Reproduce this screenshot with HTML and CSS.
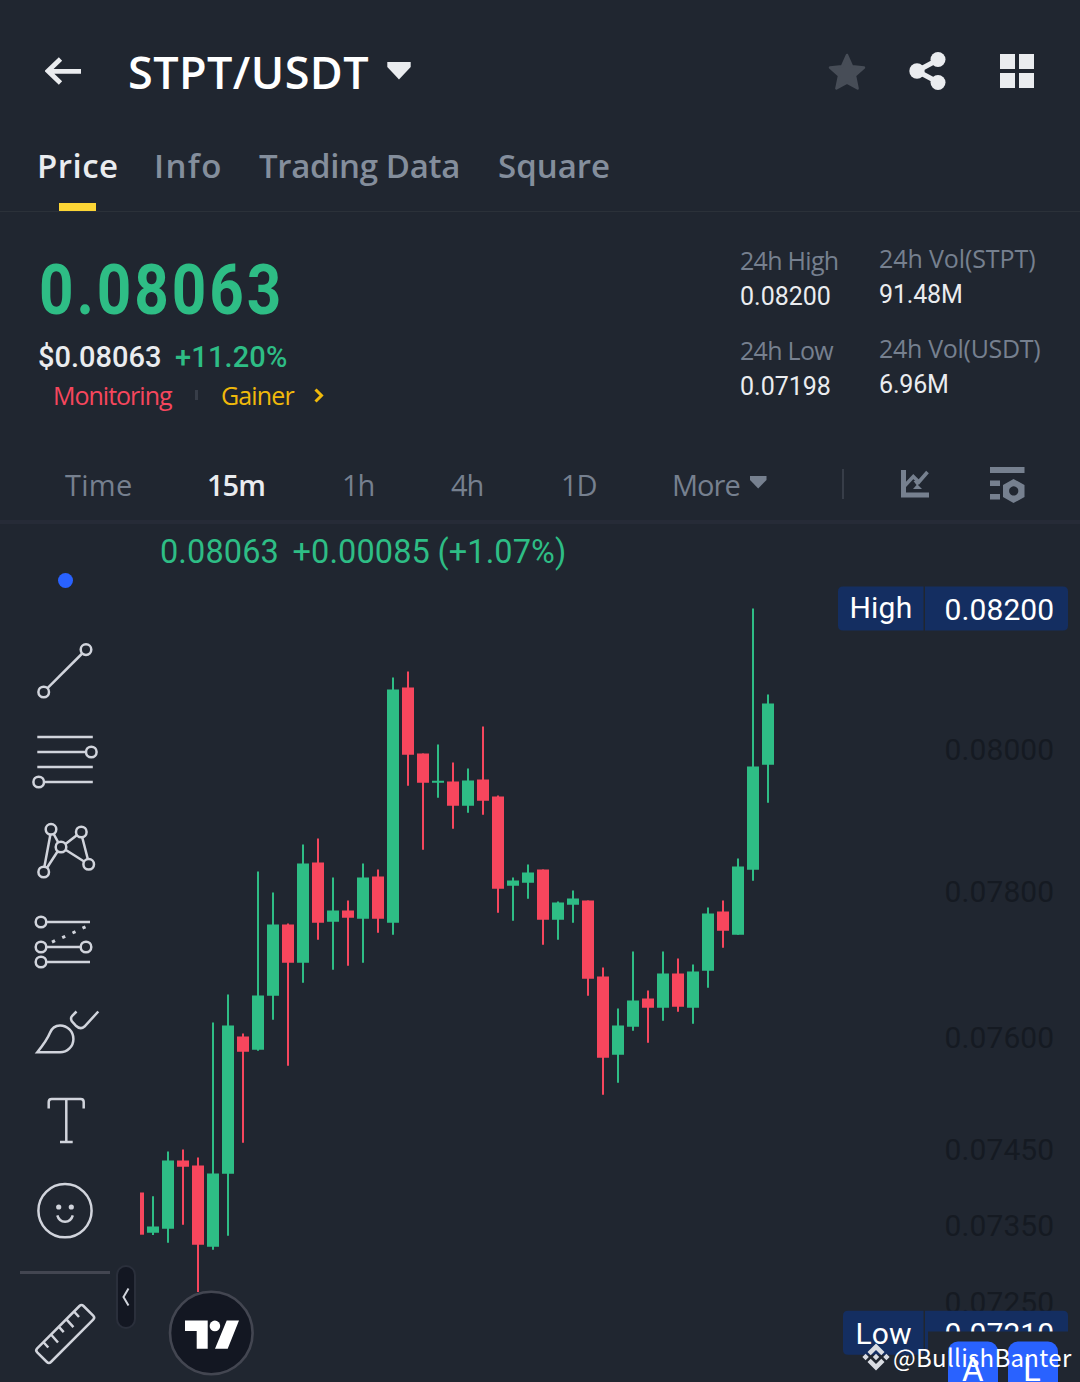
FILE: index.html
```html
<!DOCTYPE html>
<html lang="en">
<head>
<meta charset="utf-8">
<title>STPT/USDT</title>
<link rel="stylesheet" href="styles.css">
</head>
<body>
<main class="app">
  <header class="header">
    <svg class="back" width="36" height="28" viewBox="0 0 36 28"><path d="M15.500 2 3 14l12.500 12M2.500 14.300H36" fill="none" stroke="#eaecef" stroke-width="4.800"/></svg>
    <h1 class="pair">STPT/USDT</h1>
    <svg class="pair-caret" width="24" height="18" viewBox="0 0 24 18"><path d="M.3 0h23.400v5L12 17.600.3 5z" fill="#eaecef"/></svg>
    <div class="actions">
      <svg width="38" height="38" viewBox="0 0 38 38"><path d="M19 2l5 11.200 12 1.300-9 8.200 2.600 12.800L19 29.600 8.400 35.500 11 22.700 2 14.500l12-1.300z" fill="#474d57" stroke="#474d57" stroke-width="2.500" stroke-linejoin="round"/></svg>
      <svg width="37" height="38" viewBox="0 0 37 38"><path d="M29.500 7.500 8 19l21.500 11.500" fill="none" stroke="#eaecef" stroke-width="5"/><g fill="#eaecef"><circle cx="29" cy="7.500" r="7.500"/><circle cx="8" cy="19" r="7.700"/><circle cx="29" cy="30.500" r="7.500"/></g></svg>
      <svg width="34" height="34" viewBox="0 0 34 34"><path d="M0 0h15v15H0zM19 0h15v15H19zM0 19h15v15H0zM19 19h15v15H19z" fill="#eaecef"/></svg>
    </div>
  </header>

  <nav class="tabs">
    <span class="tab tab-active">Price</span>
    <span class="tab tab-info">Info</span>
    <span class="tab tab-data">Trading Data</span>
    <span class="tab">Square</span>
  </nav>

  <section class="summary">
    <div class="quote">
      <div class="last">0.08063</div>
      <div class="fiat"><span class="fiat-price">$0.08063</span><span class="change">+11.20%</span></div>
      <div class="tags">
        <span class="monitoring">Monitoring</span>
        <i class="tag-sep"></i>
        <span class="gainer">Gainer</span>
        <svg width="10" height="15" viewBox="0 0 10 15"><path d="M1.500 1.500 7.500 7.500 1.500 13.500" fill="none" stroke="#f0b90b" stroke-width="3"/></svg>
      </div>
    </div>
    <div class="stats">
      <dl class="stat high"><dt>24h High</dt><dd>0.08200</dd></dl>
      <dl class="stat low"><dt>24h Low</dt><dd>0.07198</dd></dl>
    </div>
    <div class="stats stats-volume">
      <dl class="stat vol-base"><dt>24h Vol(STPT)</dt><dd>91.48M</dd></dl>
      <dl class="stat vol-quote"><dt>24h Vol(USDT)</dt><dd>6.96M</dd></dl>
    </div>
  </section>

  <nav class="intervals">
    <span class="interval time">Time</span>
    <span class="interval interval-active">15m</span>
    <span class="interval">1h</span>
    <span class="interval">4h</span>
    <span class="interval">1D</span>
    <span class="interval more">More <svg width="17" height="13" viewBox="0 0 17 13"><path d="M0 0h16.500v4L8.200 12.500 0 4z" fill="#76808f"/></svg></span>
    <span class="tools">
      <i class="tool-sep"></i>
      <svg class="chart-type" width="28" height="28" viewBox="0 0 28 28"><path d="M2.500 0v25H28" fill="none" stroke="#76808f" stroke-width="5"/><path d="M3.500 16 12.300 6.500l5.500 5.500L26.500 2" fill="none" stroke="#76808f" stroke-width="3.600"/><path d="M12.500 11h7L17 15l4 4h-9l3.500-4z" fill="#76808f"/></svg>
      <svg width="35" height="36" viewBox="0 0 35 36"><path d="M0 0h34.500v6H0zM0 13.500h10v5.500H0zM0 27h10v5.500H0z" fill="#76808f"/><path fill-rule="evenodd" d="M23.500 12 34.500 18v12L23.500 36 13 30V18zM23.700 19.300a4.600 4.600 0 1 0 .01 0z" fill="#76808f"/></svg>
    </span>
  </nav>

  <section class="chart">
    <aside class="toolbar">
      <i class="dot"></i>
      <svg class="tool" viewBox="0 626 130 90"><path d="M47.500 688.200 82.200 653.500"/><circle cx="86" cy="649.600" r="5.300"/><circle cx="43.700" cy="692" r="5.300"/></svg>
      <svg class="tool" viewBox="0 716 130 90"><path d="M37.300 737h55.500M37.300 752h48.500M37.300 767h55.500M44.300 782h48.500"/><circle cx="91.300" cy="752" r="5.300"/><circle cx="38.700" cy="782" r="5.300"/></svg>
      <svg class="tool" viewBox="0 806 130 90"><path d="M50.400 834.600 44.400 866.700M53.700 834l4.500 8.300M65.500 844l11.300-8.800M57.700 851.300 47 867.800M65.500 849.800l18.600 11.700M82.200 837.300l5.600 21.700"/><circle cx="51" cy="829.300" r="5.300"/><circle cx="81.300" cy="832" r="5.300"/><circle cx="61" cy="847" r="5.300"/><circle cx="43.700" cy="872" r="5.300"/><circle cx="88.700" cy="864.300" r="5.300"/></svg>
      <svg class="tool" viewBox="0 896 130 90"><path d="M46.500 922H90M46.500 947h34M46.500 962H90"/><path d="M52 942.200l3-1.500M62.200 937.700l3-1.400M72.500 933l3-1.400M82.500 928.200l3-1.400" stroke-width="3"/><circle cx="41" cy="922" r="5.300"/><circle cx="41" cy="947" r="5.300"/><circle cx="86" cy="947" r="5.300"/><circle cx="41" cy="962" r="5.300"/></svg>
      <svg class="tool" viewBox="0 986 130 90"><path d="M37.300 1052.300H60a13.400 13.400 0 0 0 13.400-13.400c0-7.500-6-13.400-13.400-13.400-5 0-8.300 3-10 7.300-2.800 7-7.500 13-12.700 19.500zM76.500 1011.500l-4.300 4.300q-2 2-.5 5.200l4.500 5q4.500 4 8.300.5L98.300 1011.500"/></svg>
      <svg class="tool" viewBox="0 1076 130 90"><path d="M48.700 1108.500v-6.500q0-3 3-3h29q3 0 3 3v6.500M66.300 1099v43M60 1142h12.700"/></svg>
      <svg class="tool" viewBox="0 1166 130 90"><circle cx="65" cy="1210.700" r="26.600"/><path d="M57.300 1215.300c2.500 8.500 13 8.500 15.500 0"/><g class="eyes"><circle cx="58.700" cy="1207" r="2.600"/><circle cx="71.300" cy="1207" r="2.600"/></g></svg>
      <i class="divider"></i>
      <svg class="tool" viewBox="0 1288 130 90"><path d="M37.200 1348.300 79.500 1306q2-2 4 0l9.700 9.700q2 2 0 4L50.900 1362q-2 2-4 0l-9.700-9.700q-2-2 0-4zM43.300 1342l5 5.500M51 1334.500l7 8M58.700 1326.700l5 5.500M66.200 1319.200l7.200 8M74 1311.500l5 5.500"/></svg>
      <span class="collapse"><svg width="8" height="20" viewBox="0 0 8 20"><path d="M6.500 1.500 1.500 10l5 8.500" fill="none" stroke="#d1d4dc" stroke-width="2"/></svg></span>
    </aside>

    <svg class="plot" width="950" height="858" viewBox="130 524 950 858">
      <g class="axis">
        <text x="944.500" y="760">0.08000</text>
        <text x="944.500" y="901.500">0.07800</text>
        <text x="944.500" y="1047.500">0.07600</text>
        <text x="944.500" y="1159.500">0.07450</text>
        <text x="944.500" y="1235.500">0.07350</text>
        <text x="944.500" y="1312.500">0.07250</text>
      </g>
      <g class="legend">
        <text x="160" y="562.500">0.08063</text>
        <text x="292.500" y="562.500">+0.00085</text>
        <text x="437.500" y="562.500">(+1.07%)</text>
      </g>

      <!-- candle wicks -->
      <path class="wick up" d="M153 1196.300V1235M168 1151.500V1242.700M213 1022.500V1249.700M228 994.500V1235.700M258 871.500V1050.700M273 892.500V1019.700M303 844.500V982.700M333 877.500V969.700M363 863.500V962.700M393 677.500V934.700M438 744.500V797.700M468 768.500V812.700M513 877.500V920.700M528 864.500V898.700M558 901.500V939.700M573 890.500V922.700M618 1008.500V1082.700M633 951.500V1030.700M663 951.500V1020.700M693 964.500V1023.700M708 907.500V987.700M738 858.500V934.700M753 608.500V880.700M768 694.500V802.700"/>
      <path class="wick down" d="M183 1149.500V1224.700M198 1157.500V1292M243 1033.500V1142.700M288 923.500V1065.700M318 838.500V939.700M348 900.500V965.700M378 869.500V932.700M408 671.500V785.700M423 753.500V849.700M453 762.500V828.700M483 726.500V814.700M498 795.500V912.700M543 869.500V944.700M588 900.500V995.700M603 967.500V1094.700M648 990.500V1042.700M678 958.500V1011.700M723 900.500V947.700"/>
      <!-- candle bodies -->
      <path class="candle up" d="M153 1226.500V1232.700M168 1160.500V1228.700M213 1173.500V1246.700M228 1025.500V1173.700M258 995.500V1049.700M273 924.500V995.700M303 863.500V962.700M333 910.500V921.700M363 877.500V918.700M393 689.500V922.700M438 780.700V782.700M468 780.500V805.700M513 880.500V885.700M528 872.500V882.700M558 902.500V919.700M573 898.500V904.700M618 1025.500V1054.700M633 1000.500V1026.700M663 973.500V1007.700M693 971.500V1007.700M708 913.500V970.700M738 866.500V934.700M753 766.500V869.700M768 703.500V764.700"/>
      <path class="candle down" d="M183 1160.500V1166.700M198 1165.500V1244.700M243 1036.500V1051.700M288 924.500V962.700M318 862.500V922.700M348 910.500V917.700M378 876.500V918.700M408 687.500V754.700M423 753.500V782.700M453 781.500V805.700M483 779.500V800.700M498 796.500V888.700M543 869.500V919.700M588 900.500V978.700M603 976.500V1057.700M648 998.500V1007.700M678 973.500V1006.700M723 911.500V930.700"/>
      <path d="M140 1192.500h4V1234.700h-4z" fill="#f6465d"/>

      <!-- high and low price labels -->
      <g class="range">
        <path d="M843 586.500h80.500v44H843q-5 0-5-5v-34q0-5 5-5zM925 586.500h138q5 0 5 5v34q0 5-5 5H925z"/>
        <text x="849.500" y="618" class="word">High</text>
        <text x="944.500" y="619.500">0.08200</text>
        <path d="M848 1310.700h75.500v44H848q-5 0-5-5v-34q0-5 5-5zM925 1310.700h138q5 0 5 5v39H925z"/>
        <text x="855.500" y="1343.500">Low</text>
        <text x="944.500" y="1343.500">0.07210</text>
      </g>
      <path d="M928 1331.500h152V1382H928z" fill="#202630"/>
      <rect x="948" y="1341.500" width="50" height="50" rx="10" fill="#2962ff"/>
      <rect x="1008" y="1341.500" width="50" height="50" rx="10" fill="#2962ff"/>
      <g class="scale-mode"><text x="962" y="1381">A</text><text x="1023" y="1381">L</text></g>

      <circle cx="211.300" cy="1333" r="41.300" fill="#131722" stroke="#434651" stroke-width="2.600"/>
      <path d="M185 1320.500h22.700v28.200h-11V1331H185zM226.700 1320.500H239L227.700 1348.700H215z" fill="#fff"/>
      <circle cx="214.900" cy="1325.900" r="5.300" fill="#fff"/>
    </svg>
  </section>

  <div class="watermark">
    <svg width="28" height="28" viewBox="0 0 28 28"><path d="M14 .5 22.500 9l-3.200 3.200L14 6.900l-5.300 5.300L5.500 9zM14 27.500 22.500 19l-3.200-3.200-5.300 5.300-5.300-5.300L5.500 19zM14 10.800l3.200 3.200-3.200 3.200-3.200-3.200zM3.600 10.800 6.800 14l-3.200 3.200L.4 14zM24.400 10.800l3.200 3.200-3.200 3.200-3.200-3.200z" fill="#d9dce2"/></svg>
    <span>@BullishBanter</span>
  </div>
</main>
</body>
</html>
```
FILE: styles.css
```css
* {
  box-sizing: border-box;
  margin: 0;
}

body {
  background: #202630;
  font-family: "Open Sans", "Noto Sans", sans-serif;
  color: #eaecef;
}

svg {
  display: block;
  flex: none;
}

.app {
  position: relative;
  width: 1080px;
  height: 1382px;
  overflow: hidden;
}

/* Header */

.header {
  display: flex;
  align-items: center;
  height: 142px;
  padding: 0 46px 0 45px;
}

.pair {
  width: 259px;
  margin: 1px 0 0 47px;
  font-size: 45px;
  font-weight: 600;
  line-height: 60px;
  letter-spacing: 0.4px;
  color: #fff;
}

.pair-caret {
  margin-top: -1px;
}

.actions {
  display: flex;
  align-items: center;
  margin-left: auto;
}

.actions svg:first-child {
  margin-top: 1px;
}

.actions svg:nth-child(2) {
  margin: 0 54px 0 43px;
}

/* Page tabs */

.tabs {
  display: grid;
  grid-template-columns: 117px 105px 239px auto;
  height: 70px;
  padding-left: 37px;
  border-bottom: 1px solid #2b3139;
}

.tab {
  position: relative;
  font-size: 33px;
  font-weight: 600;
  line-height: 48px;
  letter-spacing: 0;
  color: #848e9c;
}

.tab-active {
  letter-spacing: 0.5px;
  color: #eaecef;
}

.tab-active::after {
  content: "";
  position: absolute;
  left: 22px;
  bottom: 0;
  width: 37px;
  height: 8px;
  background: #fcd535;
}

.tab-info {
  letter-spacing: 1.4px;
}

.tab-data {
  letter-spacing: -0.35px;
}

/* Price summary */

.summary {
  display: flex;
  height: 237px;
  padding-top: 38px;
}

.quote {
  width: 740px;
  padding-left: 37px;
}

.last,
.fiat,
dd {
  font-family: Roboto, sans-serif;
}

.last {
  margin-left: 1.5px;
  font-size: 70px;
  font-weight: 700;
  line-height: 80px;
  letter-spacing: 3.4px;
  color: #2ebd85;
  transform: scaleX(0.86);
  transform-origin: left;
}

.fiat {
  display: flex;
  margin: 12px 0 8px 1px;
  font-size: 29px;
  font-weight: 500;
  line-height: 30px;
}

.fiat-price {
  width: 137px;
}

.change {
  letter-spacing: 0.15px;
  color: #2ebd85;
}

.tags {
  display: flex;
  align-items: center;
  padding-left: 16px;
  font-size: 25px;
  line-height: 30px;
}

.monitoring {
  width: 142px;
  letter-spacing: -1px;
  color: #f6465d;
}

.tag-sep {
  width: 3px;
  height: 10px;
  background: #373d48;
}

.gainer {
  width: 93px;
  margin-left: 23px;
  letter-spacing: -0.85px;
  color: #f0b90b;
}

.stats {
  width: 139px;
  margin-top: -5px;
}

.stats-volume {
  width: 200px;
  margin-top: -7px;
}

.stat {
  height: 90px;
  font-size: 25px;
}

dt {
  line-height: 30px;
  letter-spacing: -0.7px;
  color: #76808f;
}

dd {
  line-height: 44px;
}

.vol-base dt {
  letter-spacing: -0.1px;
}

.vol-quote dt {
  letter-spacing: -0.3px;
}

.stats-volume dd {
  letter-spacing: -0.17px;
}

/* Chart intervals */

.intervals {
  display: grid;
  grid-template-columns: 142px 135px 109px 110px 111px 170px auto;
  height: 75px;
  padding-left: 65px;
  border-bottom: 4px solid #262b37;
}

.interval {
  font-size: 29px;
  line-height: 71px;
  letter-spacing: -1px;
  color: #76808f;
}

.time {
  letter-spacing: 0.29px;
}

.interval-active {
  font-weight: 600;
  color: #eaecef;
}

.more {
  display: flex;
  align-items: center;
  gap: 10px;
}

.more svg {
  margin-top: -4px;
}

.tools {
  display: flex;
  align-items: center;
}

.tool-sep {
  width: 2px;
  height: 30px;
  margin-top: -2px;
  background: #373d48;
}

.tools .chart-type {
  margin: -2px 61px 0 57px;
}

/* Chart */

.chart {
  display: grid;
  grid-template-columns: 130px 950px;
  height: 858px;
}

.toolbar {
  position: relative;
  display: flex;
  flex-direction: column;
  align-items: flex-start;
}

.dot {
  width: 15px;
  height: 15px;
  margin: 49px 0 38px 57.5px;
  border-radius: 50%;
  background: #2962ff;
}

.tool {
  width: 130px;
  height: 90px;
  fill: none;
  stroke: #d1d4dc;
  stroke-width: 2.5;
}

.eyes {
  fill: #d1d4dc;
  stroke: none;
}

.divider {
  width: 90px;
  height: 3px;
  margin: 15px 0 14px 20px;
  background: #434651;
}

.collapse {
  position: absolute;
  left: 116px;
  top: 741px;
  display: flex;
  align-items: center;
  justify-content: center;
  width: 20px;
  height: 64px;
  border: 2px solid #2a2f3b;
  border-radius: 10px;
  background: #131722;
}

.plot {
  font-family: Roboto, sans-serif;
  font-size: 30px;
  letter-spacing: 0.1px;
}

.axis {
  fill: #151a22;
}

.legend {
  font-size: 32.5px;
  letter-spacing: 0.1px;
  fill: #2ebd85;
}

.wick {
  stroke-width: 2;
}

.candle {
  stroke-width: 12;
}

.up {
  stroke: #2ebd85;
}

.down {
  stroke: #f6465d;
}

.range path {
  fill: #142e61;
}

.range text,
.scale-mode {
  fill: #fff;
}

.range .word {
  letter-spacing: 0.2px;
}

.scale-mode {
  font-size: 33px;
  font-weight: 400;
}

.watermark {
  position: absolute;
  left: 862px;
  top: 1339px;
  display: flex;
  align-items: center;
  gap: 3px;
  font: 400 24px/36px "Noto Sans CJK SC", sans-serif;
  letter-spacing: 0.3px;
  color: #fff;
}
```
